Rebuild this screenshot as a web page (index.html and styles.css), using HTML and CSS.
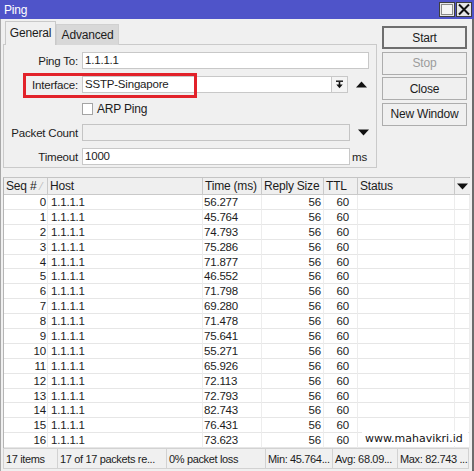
FILE: index.html
```html
<!DOCTYPE html>
<html>
<head>
<meta charset="utf-8">
<link rel="stylesheet" href="styles.css">
</head>
<body>
<div class="title">
  <span class="title-text">Ping</span>
  <div class="ctrls">
    <div class="ctl ctl-max"><div class="max-box"></div></div>
    <div class="ctl ctl-close">
      <svg width="14" height="13" viewBox="0 0 14 13"><path d="M2 1.5 L12 11.5 M12 1.5 L2 11.5" stroke="#111" stroke-width="2"/></svg>
    </div>
  </div>
</div>
<div class="frame">
  <div class="top">
    <div class="left">
      <div class="tabs">
        <div class="tab active">General</div>
        <div class="tab">Advanced</div>
      </div>
      <div class="panel">
        <div class="field">
          <div class="lbl">Ping To:</div>
          <div class="inp w-ping">1.1.1.1</div>
        </div>
        <div class="field">
          <div class="lbl">Interface:</div>
          <div class="inp w-iface">SSTP-Singapore</div>
          <div class="ddbtn">
            <svg width="9" height="9" viewBox="0 0 9 9"><path d="M1 1.2 H8" stroke="#111" stroke-width="1.4"/><path d="M4.5 2 V5" stroke="#111" stroke-width="1.6"/><path d="M1.3 4.5 H7.7 L4.5 8.2 Z" fill="#111"/></svg>
          </div>
          <svg class="tri" width="11" height="7" viewBox="0 0 11 7"><path d="M0 6.5 H11 L5.5 0.5 Z" fill="#111"/></svg>
        </div>
        <div class="field">
          <div class="lbl"></div>
          <div class="chk"></div>
          <div class="chk-lbl">ARP Ping</div>
        </div>
        <div class="field">
          <div class="lbl">Packet Count</div>
          <div class="inp w-short disabled"></div>
          <svg class="tri" width="11" height="7" viewBox="0 0 11 7"><path d="M0 0.5 H11 L5.5 6.5 Z" fill="#111"/></svg>
        </div>
        <div class="field">
          <div class="lbl">Timeout</div>
          <div class="inp w-short">1000</div>
          <div class="unit">ms</div>
        </div>
        <div class="redbox"></div>
      </div>
    </div>
    <div class="btns">
      <div class="btn btn-default">Start</div>
      <div class="btn btn-disabled">Stop</div>
      <div class="btn">Close</div>
      <div class="btn">New Window</div>
    </div>
  </div>

  <div class="tbl">
    <div class="th">Seq # <span class="sort">⁄</span></div>
    <div class="th">Host</div>
    <div class="th">Time (ms)</div>
    <div class="th">Reply Size</div>
    <div class="th">TTL</div>
    <div class="th">Status</div>
    <div class="th th-arrow"><svg width="11" height="7" viewBox="0 0 11 7"><path d="M0 0.5 H11 L5.5 6.5 Z" fill="#111"/></svg></div>

    <div class="td seq">0</div><div class="td host">1.1.1.1</div><div class="td time">56.277</div><div class="td size">56</div><div class="td ttl">60</div><div class="td"></div><div class="td"></div>
    <div class="td seq">1</div><div class="td host">1.1.1.1</div><div class="td time">45.764</div><div class="td size">56</div><div class="td ttl">60</div><div class="td"></div><div class="td"></div>
    <div class="td seq">2</div><div class="td host">1.1.1.1</div><div class="td time">74.793</div><div class="td size">56</div><div class="td ttl">60</div><div class="td"></div><div class="td"></div>
    <div class="td seq">3</div><div class="td host">1.1.1.1</div><div class="td time">75.286</div><div class="td size">56</div><div class="td ttl">60</div><div class="td"></div><div class="td"></div>
    <div class="td seq">4</div><div class="td host">1.1.1.1</div><div class="td time">71.877</div><div class="td size">56</div><div class="td ttl">60</div><div class="td"></div><div class="td"></div>
    <div class="td seq">5</div><div class="td host">1.1.1.1</div><div class="td time">46.552</div><div class="td size">56</div><div class="td ttl">60</div><div class="td"></div><div class="td"></div>
    <div class="td seq">6</div><div class="td host">1.1.1.1</div><div class="td time">71.798</div><div class="td size">56</div><div class="td ttl">60</div><div class="td"></div><div class="td"></div>
    <div class="td seq">7</div><div class="td host">1.1.1.1</div><div class="td time">69.280</div><div class="td size">56</div><div class="td ttl">60</div><div class="td"></div><div class="td"></div>
    <div class="td seq">8</div><div class="td host">1.1.1.1</div><div class="td time">71.478</div><div class="td size">56</div><div class="td ttl">60</div><div class="td"></div><div class="td"></div>
    <div class="td seq">9</div><div class="td host">1.1.1.1</div><div class="td time">75.641</div><div class="td size">56</div><div class="td ttl">60</div><div class="td"></div><div class="td"></div>
    <div class="td seq">10</div><div class="td host">1.1.1.1</div><div class="td time">55.271</div><div class="td size">56</div><div class="td ttl">60</div><div class="td"></div><div class="td"></div>
    <div class="td seq">11</div><div class="td host">1.1.1.1</div><div class="td time">65.926</div><div class="td size">56</div><div class="td ttl">60</div><div class="td"></div><div class="td"></div>
    <div class="td seq">12</div><div class="td host">1.1.1.1</div><div class="td time">72.113</div><div class="td size">56</div><div class="td ttl">60</div><div class="td"></div><div class="td"></div>
    <div class="td seq">13</div><div class="td host">1.1.1.1</div><div class="td time">72.793</div><div class="td size">56</div><div class="td ttl">60</div><div class="td"></div><div class="td"></div>
    <div class="td seq">14</div><div class="td host">1.1.1.1</div><div class="td time">82.743</div><div class="td size">56</div><div class="td ttl">60</div><div class="td"></div><div class="td"></div>
    <div class="td seq">15</div><div class="td host">1.1.1.1</div><div class="td time">76.431</div><div class="td size">56</div><div class="td ttl">60</div><div class="td"></div><div class="td"></div>
    <div class="td seq">16</div><div class="td host">1.1.1.1</div><div class="td time">73.623</div><div class="td size">56</div><div class="td ttl">60</div><div class="td"></div><div class="td"></div>
  </div>

  <div class="status">
    <div class="sb">17 items</div>
    <div class="sb">17 of 17 packets re...</div>
    <div class="sb">0% packet loss</div>
    <div class="sb">Min: 45.764...</div>
    <div class="sb">Avg: 68.09...</div>
    <div class="sb">Max: 82.743 ...</div>
  </div>
</div>
<div class="watermark">www.mahavikri.id</div>
</body>
</html>
```
FILE: styles.css
```css
* { box-sizing: border-box; margin: 0; padding: 0; }
html, body { width: 474px; height: 471px; overflow: hidden; }
body {
  font-family: "Liberation Sans", Arial, sans-serif;
  font-size: 11.5px;
  letter-spacing: -0.2px;
  color: #1c1c1c;
  background: #f0f0f0;
  position: relative;
}

/* title bar */
.title {
  height: 19px;
  background: #4f54c9;
  display: flex;
  justify-content: space-between;
  align-items: center;
  padding-left: 4px;
  color: #fff;
  font-size: 12px;
}
.ctrls { display: flex; gap: 1px; margin-right: 2px; align-self: flex-start; margin-top: 2px; }
.ctl {
  width: 16px; height: 15px;
  background: #e6e6e6;
  border: 1px solid #3e3e3e;
  display: flex; align-items: center; justify-content: center;
}
.max-box { width: 12px; height: 11px; border: 1px solid #8a8a8a; background: #f4f4f4; }

/* frame */
.frame {
  height: 452px;
  display: flex;
  flex-direction: column;
  border-left: 1px solid #a8a8a8;
  border-right: 2px solid #6c6c6c;
}
.top { display: flex; height: 158px; }
.left { width: 374px; margin-left: 2px; }

.tabs { display: flex; height: 25px; align-items: flex-end; padding-left: 2px; }
.tab {
  position: relative;
  z-index: 1;
  margin-bottom: -1px;
  width: 63px;
  height: 21px;
  background: #d8d8d8;
  border: 1px solid #d0d0d0;
  border-bottom: none;
  display: flex; align-items: center; justify-content: center;
  font-size: 12px;
}
.tab.active {
  width: 51px;
  height: 24px;
  background: #f0f0f0;
  border-color: #c9c9c9;
  padding-bottom: 2px;
}

.panel {
  position: relative;
  height: 124px;
  border: 1px solid #cacaca;
  padding-top: 7px;
}
.field { display: flex; align-items: center; height: 17px; margin-bottom: 7px; }
.lbl { width: 74px; margin-right: 4px; text-align: right; white-space: nowrap; }
.inp {
  height: 17px;
  background: #fff;
  border: 1px solid #c8c8c8;
  padding-left: 2px;
  line-height: 15px;
}
.w-ping { width: 287px; }
.w-iface { width: 250px; }
.w-short { width: 268px; }
.inp.disabled { background: #f0f0f0; border-color: #c4c4c4; }
.ddbtn {
  width: 16px; height: 17px;
  border: 1px solid #c8c8c8;
  border-left: none;
  background: #f4f4f4;
  display: flex; align-items: center; justify-content: center;
}
.tri { margin-left: 8px; }
.chk { width: 11px; height: 12px; background: #fff; border: 1px solid #a4a4a4; }
.chk-lbl { margin-left: 4px; font-size: 12px; }
.unit { margin-left: 2px; }
.redbox {
  position: absolute;
  left: 19px; top: 28px;
  width: 174px; height: 25px;
  border: 3px solid #e2222a;
}

/* buttons */
.btns {
  margin-left: 5px;
  width: 85px;
  padding-top: 7px;
  display: flex;
  flex-direction: column;
  gap: 2.6px;
}
.btn {
  height: 23px;
  border: 1px solid #adadad;
  background: #f0f0f0;
  display: flex; align-items: center; justify-content: center;
  font-size: 12px;
}
.btn-default { border: 2px solid #6e6e6e; }
.btn-disabled { color: #9c9c9c; }

/* table */
.tbl {
  margin-left: 2px;
  width: 467px;
  display: grid;
  grid-template-columns: 44px 155px 59px 62px 34px 97px 15px;
  grid-template-rows: 17px repeat(17, 14.9px);
  border-left: 1px solid #b4b4b4;
  border-right: 1px solid #b4b4b4;
  border-top: 1px solid #c4c4c4;
  background: #fff;
}
.th {
  background: #efefef;
  border-right: 1px solid #c9c9c9;
  border-bottom: 1px solid #c9c9c9;
  padding-left: 2px;
  display: flex; align-items: center;
  white-space: nowrap;
  font-size: 12px;
}
.sort { color: #b8b8b8; font-size: 10px; margin-left: 4px; }
.th-arrow { border-right: none; justify-content: center; padding-left: 0; }
.td {
  border-bottom: 1px solid #e6e6e6;
  border-right: 1px solid #ededed;
  line-height: 14px;
  white-space: nowrap;
  overflow: hidden;
}
.seq { text-align: right; padding-right: 1px; }
.host { padding-left: 3px; }
.time { padding-left: 1px; }
.size { text-align: right; padding-right: 2px; }
.ttl { text-align: right; padding-right: 8px; }

/* status bar */
.status {
  margin-left: 2px;
  width: 466px;
  height: 21px;
  display: grid;
  grid-template-columns: 54px 109px 99px 67px 65px 72px;
  font-size: 11px;
  letter-spacing: -0.35px;
}
.sb {
  border: 1px solid #d2d2d2;
  border-right: none;
  padding-left: 2px;
  display: flex; align-items: center;
  white-space: nowrap;
  overflow: hidden;
}
.sb:last-child { border-right: 1px solid #d2d2d2; }

.watermark {
  position: absolute;
  left: 362px; top: 431px;
  width: 106px; height: 15px;
  background: #fff;
  font-family: "DejaVu Sans", Verdana, sans-serif;
  font-size: 11px;
  letter-spacing: 0;
  color: #111;
  padding-left: 3px;
  line-height: 15px;
}
```
